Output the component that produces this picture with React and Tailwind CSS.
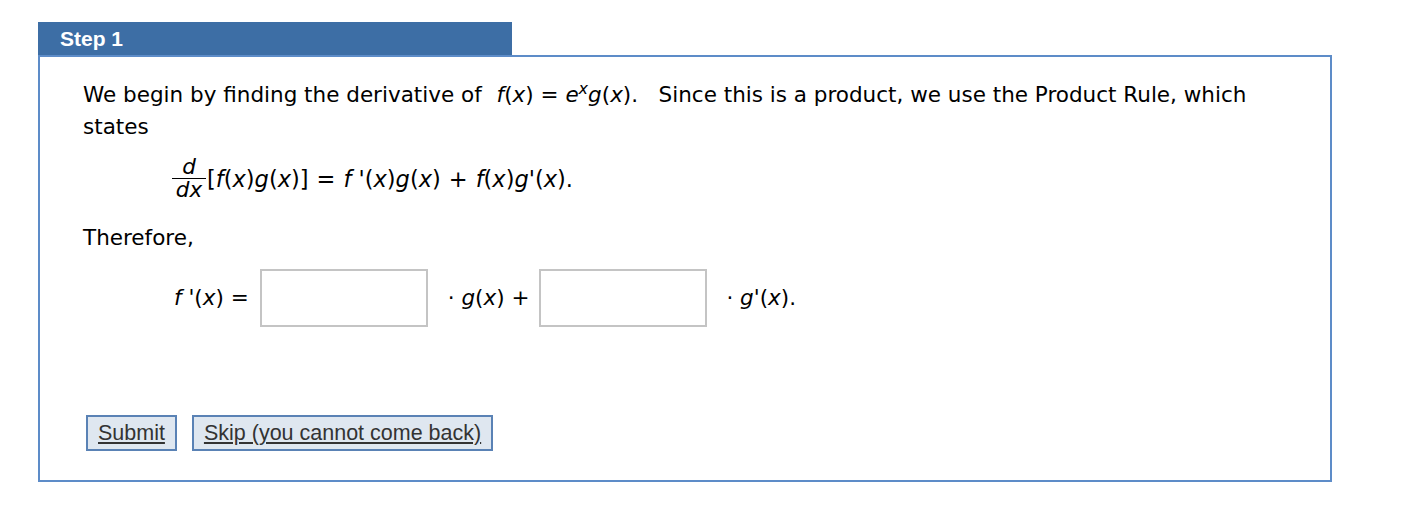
import React from 'react';

const mathFont = { fontFamily: '"DejaVu Sans", Verdana, sans-serif' };

const AnswerBox = () => (
  <input
    type="text"
    className="w-[168px] h-[58px] bg-white border-2 border-[#c4c4c4] outline-none"
  />
);

const Op = ({ children }) => <span className="mx-[8px]">{children}</span>;

const App = () => {
  return (
    <div className="w-[1414px] h-[522px] bg-white pt-[22px] pl-[38px]">
      <div className="w-[474px] h-[33px] bg-[#3d6ea5] pl-[22px] pt-[5px] text-white text-[21px] font-bold font-['Liberation_Sans',Arial,sans-serif] leading-[24px]">
        Step 1
      </div>
      <div
        className="w-[1294px] h-[427px] border-2 border-[#5d8cc8] pl-[43px] pt-[22px] text-[21.5px] text-black leading-[32px]"
        style={mathFont}
      >
        <p className="w-[1200px]">
          We begin by finding the derivative of{' '}
          <span className="ml-[8px]"><i>f</i>(<i>x</i>) = <i>e</i><sup className="text-[16px]"><i>x</i></sup><i>g</i>(<i>x</i>)</span>.
          &nbsp; Since this is a product, we use the Product Rule, which states
        </p>

        <div className="flex items-center ml-[89px] mt-[7px] h-[56px]">
          <span className="inline-flex flex-col items-center leading-[22px] mr-[1px]">
            <i className="px-[2px]">d</i>
            <span className="block w-[34px] h-[1px] bg-black"></span>
            <i>dx</i>
          </span>
          <span className="mt-[2px] text-[22.5px]">
            [<i>f</i>(<i>x</i>)<i>g</i>(<i>x</i>)]<Op>=</Op><i>f</i> '(<i>x</i>)<i>g</i>(<i>x</i>)<Op>+</Op><i>f</i>(<i>x</i>)<i>g</i>'(<i>x</i>).
          </span>
        </div>

        <p className="mt-[16px]">Therefore,</p>

        <div className="flex items-center ml-[91px] mt-[15px] h-[58px]">
          <span className="mr-[11px]"><i>f</i> '(<i>x</i>) =</span>
          <AnswerBox />
          <span className="ml-[20px] mr-[10px]">· <i>g</i>(<i>x</i>) +</span>
          <AnswerBox />
          <span className="ml-[19px]">· <i>g</i>'(<i>x</i>).</span>
        </div>

        <div className="flex items-center gap-[15px] mt-[88px] ml-[3px] font-['Liberation_Sans',Arial,sans-serif] text-[21.5px] text-[#333]">
          <button className="h-[36px] px-[10px] bg-[#dfe7f0] border-2 border-[#5a82b5] underline leading-[30px]">
            Submit
          </button>
          <button className="h-[36px] px-[10px] bg-[#dfe7f0] border-2 border-[#5a82b5] underline leading-[30px]">
            Skip (you cannot come back)
          </button>
        </div>
      </div>
    </div>
  );
};

export default App;
